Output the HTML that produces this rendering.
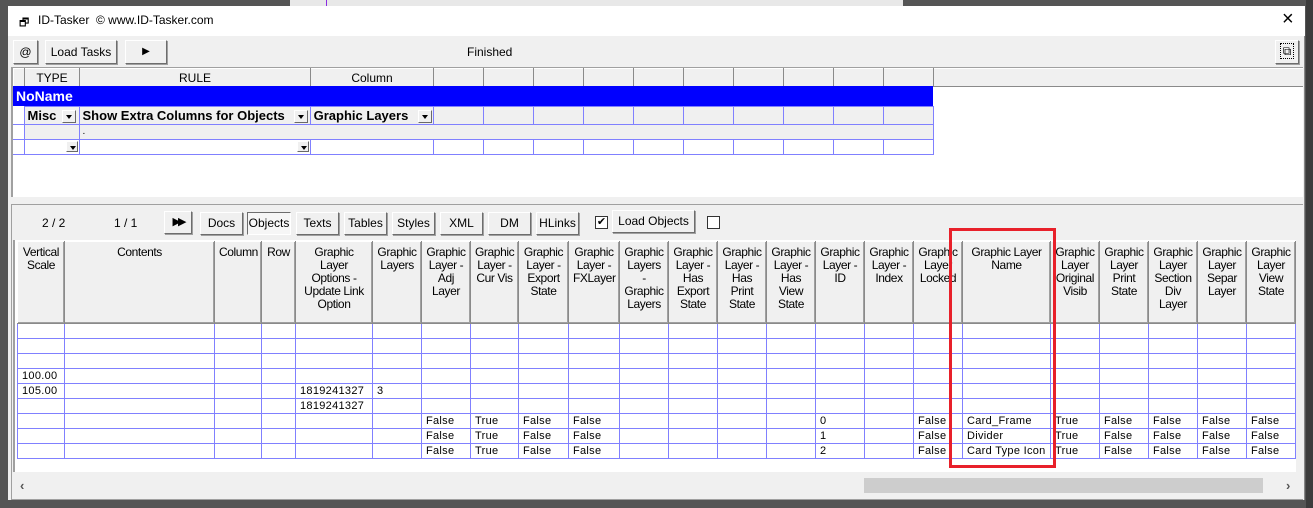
<!DOCTYPE html>
<html><head><meta charset="utf-8">
<style>
*{box-sizing:border-box;margin:0;padding:0}
body{width:1313px;height:508px;background:#555;position:relative;overflow:hidden;font-family:"Liberation Sans",sans-serif;font-size:12px;color:#000}
.a{position:absolute}
.btn{position:absolute;background:#f0f0f0;border:1px solid;border-color:#fff #6d6d6d #6d6d6d #fff;box-shadow:1px 1px 0 #a0a0a0;text-align:center;font-size:12px;line-height:20px}
.dd{position:absolute;width:14px;height:13px;background:#f0f0f0;border:1px solid;border-color:#fff #696969 #696969 #fff;}
.dd:after{content:"";position:absolute;left:3px;top:4px;border-left:3.5px solid transparent;border-right:3.5px solid transparent;border-top:4px solid #000}
table{border-collapse:collapse;table-layout:fixed;position:absolute}
.g td{border:1px solid #8080ff;height:15px;font-size:11px;padding:0 0 0 4px;white-space:nowrap;overflow:hidden;line-height:13px;letter-spacing:0.3px}
.g th{background:#f0f0f0;border:1px solid #8a8a8a;border-left-color:#fff;border-top-color:#fff;box-shadow:inset -1px -1px 0 #a0a0a0;font-weight:normal;font-size:12px;letter-spacing:-0.4px;vertical-align:top;line-height:13px;padding:4px 4px 0 4px;height:82px;overflow:hidden}
.t td{border:1px solid #8080ff;height:15px;overflow:hidden}
.t th{background:#f0f0f0;border:1px solid #8a8a8a;border-left-color:#fff;border-top-color:#fff;font-weight:normal;font-size:12px;height:18px}
</style></head><body>
<div class="a" style="left:290px;top:0;width:613px;height:6px;background:#e8e8e8"></div>
<div class="a" style="left:326px;top:0;width:1px;height:6px;background:#8a2be2"></div>
<div class="a" style="left:8px;top:6px;width:1297px;height:494px;background:#f0f0f0;border-right:1px solid #888"></div>
<div class="a" style="left:8px;top:6px;width:1297px;height:30px;background:#fff"></div>
<div class="a" style="left:19px;top:14px;font-size:11px">&#x1F5D7;</div>
<div class="a" style="left:38px;top:13px;font-size:12px">ID-Tasker &nbsp;© www.ID-Tasker.com</div>
<div class="a" style="left:1282px;top:8px;font-size:20px;font-weight:300">×</div>
<div class="btn" style="left:13px;top:40px;width:25px;height:24px;line-height:22px">@</div>
<div class="btn" style="left:45px;top:40px;width:72px;height:24px;line-height:22px">Load Tasks</div>
<div class="btn" style="left:125px;top:40px;width:42px;height:24px;line-height:22px;font-size:10px">&#9654;</div>
<div class="a" style="left:467px;top:45px">Finished</div>
<div class="btn" style="left:1275px;top:40px;width:24px;height:24px;line-height:20px;font-size:12px"><span style="border:1px dotted #000;padding:0 2px">⧉</span></div>
<div class="a" style="left:11px;top:67px;width:1292px;height:130px;background:#fff;border-left:2px solid #a0a0a0;border-top:1px solid #a0a0a0"></div>
<table class="t" style="left:13px;top:68px;width:1290px">
<colgroup><col style="width:11px"><col style="width:55px"><col style="width:231px"><col style="width:123px"><col style="width:50px"><col style="width:50px"><col style="width:50px"><col style="width:50px"><col style="width:50px"><col style="width:50px"><col style="width:50px"><col style="width:50px"><col style="width:50px"><col style="width:50px"><col></colgroup>
<tr><th></th><th>TYPE</th><th>RULE</th><th>Column</th><th></th><th></th><th></th><th></th><th></th><th></th><th></th><th></th><th></th><th></th><th style="border-right:none"></th></tr>
</table>
<div class="a" style="left:13px;top:86px;width:920px;height:20px;background:#0000ff;color:#fff;font-weight:bold;font-size:14px;line-height:20px;padding-left:3px">NoName</div>
<div class="a" style="left:24px;top:107px;width:909px;height:32px;background:#f0f0f0"></div>
<table class="t" style="left:13px;top:106px;width:921px">
<colgroup><col style="width:11px"><col style="width:55px"><col style="width:231px"><col style="width:123px"><col style="width:50px"><col style="width:50px"><col style="width:50px"><col style="width:50px"><col style="width:50px"><col style="width:50px"><col style="width:50px"><col style="width:50px"><col style="width:50px"><col style="width:50px"></colgroup>
<tr style="height:18px"><td style="border-left:none;border-top:none"></td><td style="font-weight:bold;font-size:13px;padding-left:3px">Misc</td><td style="font-weight:bold;font-size:13px;padding-left:3px">Show Extra Columns for Objects</td><td style="font-weight:bold;font-size:13px;padding-left:3px">Graphic Layers</td><td></td><td></td><td></td><td></td><td></td><td></td><td></td><td></td><td></td><td></td></tr>
<tr style="height:15px"><td style="border-left:none;border-top:none;border-bottom:none"></td><td style="border-top:none;border-bottom:none"></td><td colspan="12" style="font-size:10px;padding-left:3px;line-height:8px">.</td></tr>
<tr style="height:15px"><td style="border-left:none"></td><td></td><td></td><td></td><td></td><td></td><td></td><td></td><td></td><td></td><td></td><td></td><td></td><td></td></tr>
</table>
<div class="dd" style="left:62px;top:110px"></div>
<div class="dd" style="left:294px;top:110px"></div>
<div class="dd" style="left:418px;top:110px"></div>
<div class="dd" style="left:66px;top:141px;width:12px;height:11px"></div>
<div class="dd" style="left:297px;top:141px;width:12px;height:11px"></div>
<div class="a" style="left:11px;top:204px;width:1292px;height:296px;border:1px solid #a0a0a0;border-right:none"></div>
<div class="a" style="left:42px;top:216px">2 / 2</div>
<div class="a" style="left:114px;top:216px">1 / 1</div>
<div class="btn" style="left:164px;top:211px;width:28px;height:23px;font-size:11px;color:#000;letter-spacing:-3px">&#9654;&#9654;</div>
<div class="btn" style="left:200px;top:212px;width:43px;height:23px">Docs</div>
<div class="btn" style="left:247px;top:212px;width:44px;height:23px;border-color:#6d6d6d #fff #fff #6d6d6d;box-shadow:none;background:#f6f6f6">Objects</div>
<div class="btn" style="left:296px;top:212px;width:43px;height:23px">Texts</div>
<div class="btn" style="left:344px;top:212px;width:43px;height:23px">Tables</div>
<div class="btn" style="left:392px;top:212px;width:43px;height:23px">Styles</div>
<div class="btn" style="left:440px;top:212px;width:43px;height:23px">XML</div>
<div class="btn" style="left:488px;top:212px;width:43px;height:23px">DM</div>
<div class="btn" style="left:536px;top:212px;width:43px;height:23px">HLinks</div>
<div class="a" style="left:595px;top:216px;width:13px;height:13px;background:#fff;border:1px solid #333;font-size:11px;line-height:11px;text-align:center">✔</div>
<div class="btn" style="left:612px;top:210px;width:83px;height:23px">Load Objects</div>
<div class="a" style="left:707px;top:216px;width:13px;height:13px;background:#fff;border:1px solid #333"></div>
<div class="a" style="left:13px;top:240px;width:1283px;height:232px;background:#fff;border-left:2px solid #a0a0a0"></div>
<table class="g" style="left:17px;top:241px;width:1286px">
<colgroup><col style="width:47px"><col style="width:150px"><col style="width:47px"><col style="width:34px"><col style="width:77px"><col style="width:49px"><col style="width:49px"><col style="width:48px"><col style="width:50px"><col style="width:51px"><col style="width:49px"><col style="width:49px"><col style="width:49px"><col style="width:49px"><col style="width:49px"><col style="width:49px"><col style="width:49px"><col style="width:88px"><col style="width:49px"><col style="width:49px"><col style="width:49px"><col style="width:49px"><col style="width:49px"><col style="width:8px"></colgroup>
<tr><th>Vertical Scale</th><th>Contents</th><th>Column</th><th>Row</th><th>Graphic Layer Options - Update Link Option</th><th>Graphic Layers</th><th>Graphic Layer - Adj Layer</th><th>Graphic Layer - Cur Vis</th><th>Graphic Layer - Export State</th><th>Graphic Layer - FXLayer</th><th>Graphic Layers - Graphic Layers</th><th>Graphic Layer - Has Export State</th><th>Graphic Layer - Has Print State</th><th>Graphic Layer - Has View State</th><th>Graphic Layer - ID</th><th>Graphic Layer - Index</th><th>Graphic Layer Locked</th><th>Graphic Layer Name</th><th>Graphic Layer Original Visib</th><th>Graphic Layer Print State</th><th>Graphic Layer Section Div Layer</th><th>Graphic Layer Separ Layer</th><th>Graphic Layer View State</th><th style="background:#f0f0f0;border:none;box-shadow:none"></th></tr>
<tr><td></td><td></td><td></td><td></td><td></td><td></td><td></td><td></td><td></td><td></td><td></td><td></td><td></td><td></td><td></td><td></td><td></td><td></td><td></td><td></td><td></td><td></td><td></td><td style="border:none;background:#f0f0f0"></td></tr>
<tr><td></td><td></td><td></td><td></td><td></td><td></td><td></td><td></td><td></td><td></td><td></td><td></td><td></td><td></td><td></td><td></td><td></td><td></td><td></td><td></td><td></td><td></td><td></td><td style="border:none;background:#f0f0f0"></td></tr>
<tr><td></td><td></td><td></td><td></td><td></td><td></td><td></td><td></td><td></td><td></td><td></td><td></td><td></td><td></td><td></td><td></td><td></td><td></td><td></td><td></td><td></td><td></td><td></td><td style="border:none;background:#f0f0f0"></td></tr>
<tr><td>100.00</td><td></td><td></td><td></td><td></td><td></td><td></td><td></td><td></td><td></td><td></td><td></td><td></td><td></td><td></td><td></td><td></td><td></td><td></td><td></td><td></td><td></td><td></td><td style="border:none;background:#f0f0f0"></td></tr>
<tr><td>105.00</td><td></td><td></td><td></td><td>1819241327</td><td>3</td><td></td><td></td><td></td><td></td><td></td><td></td><td></td><td></td><td></td><td></td><td></td><td></td><td></td><td></td><td></td><td></td><td></td><td style="border:none;background:#f0f0f0"></td></tr>
<tr><td></td><td></td><td></td><td></td><td>1819241327</td><td></td><td></td><td></td><td></td><td></td><td></td><td></td><td></td><td></td><td></td><td></td><td></td><td></td><td></td><td></td><td></td><td></td><td></td><td style="border:none;background:#f0f0f0"></td></tr>
<tr><td></td><td></td><td></td><td></td><td></td><td></td><td>False</td><td>True</td><td>False</td><td>False</td><td></td><td></td><td></td><td></td><td>0</td><td></td><td>False</td><td>Card_Frame</td><td>True</td><td>False</td><td>False</td><td>False</td><td>False</td><td style="border:none;background:#f0f0f0"></td></tr>
<tr><td></td><td></td><td></td><td></td><td></td><td></td><td>False</td><td>True</td><td>False</td><td>False</td><td></td><td></td><td></td><td></td><td>1</td><td></td><td>False</td><td>Divider</td><td>True</td><td>False</td><td>False</td><td>False</td><td>False</td><td style="border:none;background:#f0f0f0"></td></tr>
<tr><td></td><td></td><td></td><td></td><td></td><td></td><td>False</td><td>True</td><td>False</td><td>False</td><td></td><td></td><td></td><td></td><td>2</td><td></td><td>False</td><td>Card Type Icon</td><td>True</td><td>False</td><td>False</td><td>False</td><td>False</td><td style="border:none;background:#f0f0f0"></td></tr>
</table>
<div class="a" style="left:15px;top:477px;width:1281px;height:17px;background:#f0f0f0"></div>
<div class="a" style="left:864px;top:478px;width:399px;height:15px;background:#cdcdcd"></div>
<div class="a" style="left:20px;top:478px;font-size:13px;color:#555;font-weight:bold">&lsaquo;</div>
<div class="a" style="left:1286px;top:478px;font-size:13px;color:#555;font-weight:bold">&rsaquo;</div>
<div class="a" style="left:949px;top:228px;width:107px;height:240px;border:3px solid #e8202a"></div>
<div class="a" style="left:1306px;top:0;width:7px;height:508px;background:#3c3c3c"></div>
</body></html>
